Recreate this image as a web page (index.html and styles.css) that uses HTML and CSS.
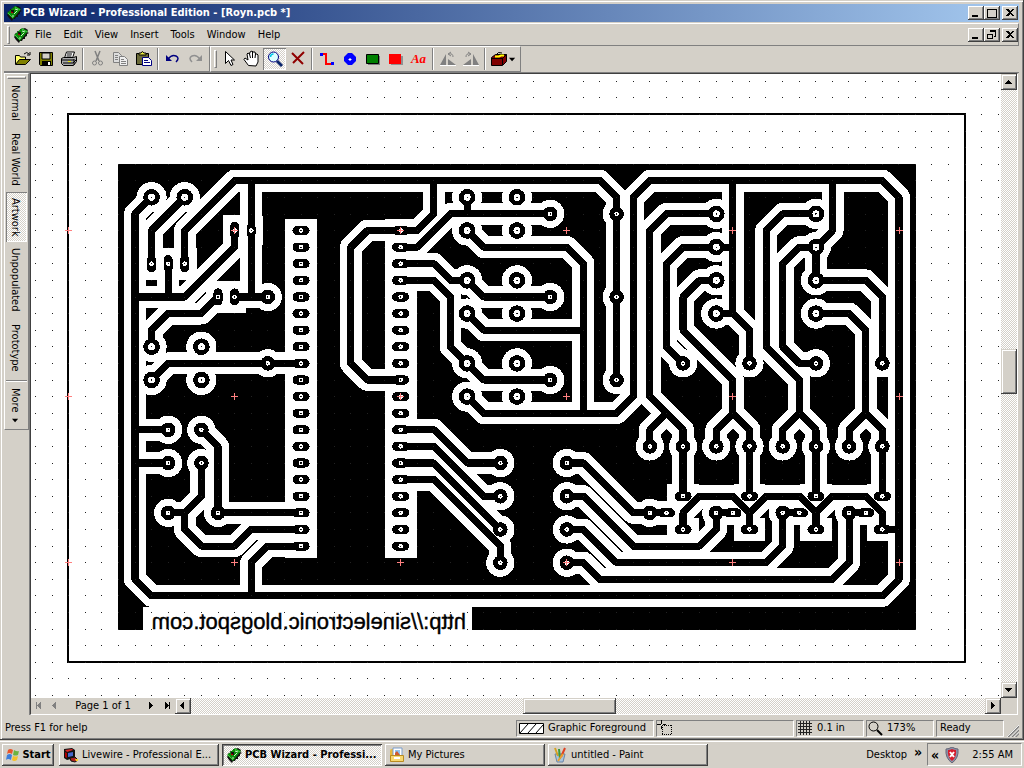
FILE: index.html
```
<!DOCTYPE html>
<html lang="en">
<head>
    <meta charset="utf-8">
    <title>PCB Wizard - Professional Edition - [Royn.pcb *]</title>
    <link rel="stylesheet" href="styles.css">
</head>
<body>
    <!-- shared icons -->
    <svg class="sprite" aria-hidden="true">
        <symbol id="chip" viewBox="0 0 16 16">
            <path d="M1 10l2-3-1-1 3 0-1-2 3 0 0-2 2 0 3-1 3 2-1 2 2 1-2 1 0 2-2 1 0 2-2 0-1 2-2 0-1 2-3-3z" fill="#111"/>
            <path d="M1 8L9 1l6 3-8 10z" fill="#0a8a0a"/>
            <path d="M2 8l5 5M9 2l5 3" stroke="#3fd03f" fill="none"/>
            <path d="M5 5h3v3H5z" fill="#101010"/>
            <path d="M5 7l2 1" stroke="#e00000"/>
            <path d="M9 4l3 1M8 9l3-3M6 11h2" stroke="#c8f0c8"/>
        </symbol>
        <symbol id="min" viewBox="0 0 12 10"><path d="M2 7h6v2H2z"/></symbol>
        <symbol id="close" viewBox="0 0 12 10"><path d="M2 1h2l2 2 2-2h2L7 4.500l3 3.500H8L6 6 4 8H2l3-3.500z"/></symbol>
        <symbol id="up" viewBox="0 0 8 8"><path d="M0 6h7L3.500 2z"/></symbol>
        <symbol id="down" viewBox="0 0 8 8"><path d="M0 2h7L3.500 6z"/></symbol>
        <symbol id="left" viewBox="0 0 8 8"><path d="M5 0v7L1 3.500z"/></symbol>
        <symbol id="right" viewBox="0 0 8 8"><path d="M2 0v7l4-3.500z"/></symbol>
    </svg>

    <div class="window">
        <header class="titlebar">
            <svg class="app-icon"><use href="#chip"/></svg>
            <h1>PCB Wizard - Professional Edition - [Royn.pcb *]</h1>
            <div class="window-buttons">
                <button aria-label="Minimize"><svg><use href="#min"/></svg></button>
                <button aria-label="Maximize"><svg viewBox="0 0 12 10"><path d="M1.500 1h9v8h-9zM1 1.500h10" fill="none" stroke="#000"/></svg></button>
                <button class="close" aria-label="Close"><svg><use href="#close"/></svg></button>
            </div>
        </header>

        <nav class="menubar">
            <span class="grip"></span>
            <svg class="app-icon"><use href="#chip"/></svg>
            <button>File</button>
            <button>Edit</button>
            <button>View</button>
            <button>Insert</button>
            <button>Tools</button>
            <button>Window</button>
            <button>Help</button>
            <div class="window-buttons">
                <button aria-label="Minimize document"><svg><use href="#min"/></svg></button>
                <button aria-label="Restore document"><svg viewBox="0 0 12 10"><path d="M4.500 1v-.500h5V6H8M4 1h6M1.500 4.500h5v4h-5zM1 4h6" fill="none" stroke="#000"/></svg></button>
                <button class="close" aria-label="Close document"><svg><use href="#close"/></svg></button>
            </div>
        </nav>

        <div class="toolbars">
            <div class="toolbar">
                <button aria-label="Open"><svg viewBox="0 0 18 18"><path d="M1.500 14V5.500h4l1 1.500h5v3" fill="#ff6" stroke="#000"/><path d="M1.500 14.500l4-5h11l-5 5z" fill="#808000" stroke="#000"/><path d="M10 4q3-3 5 0M16 2v3h-3" fill="none" stroke="#000"/></svg></button>
                <button aria-label="Save"><svg viewBox="0 0 18 18"><path d="M2.500 2.500h13v13h-12l-1-1z" fill="#808000" stroke="#000"/><path d="M5 3h8v6H5z" fill="#d4d0c8" stroke="#000"/><path d="M5 11h9v5H5z"/><path d="M11 12h2v3h-2z" fill="#fff"/></svg></button>
                <button aria-label="Print"><svg viewBox="0 0 18 18"><path d="M4.500 8l2-6h8l-2 6z" fill="#fff" stroke="#000"/><path d="M7 4h5M6.500 6h5" stroke="#000"/><path d="M1.500 8.500l2-1h10l3-1v5l-3 4h-10l-2-2z" fill="#aaa" stroke="#000"/><path d="M2 10h12M3 13h10l3-3M14 9v6" stroke="#000" fill="none"/><path d="M8 11.500h3" stroke="#ee0"/></svg></button>
                <span class="sep"></span>
                <button aria-label="Cut" disabled><svg viewBox="0 0 18 18"><path d="M6 1l4 10M11 1L7 11" fill="none" stroke="#808080" stroke-width="1.500"/><circle cx="5.500" cy="13" r="2" fill="none" stroke="#808080"/><circle cx="11.500" cy="13" r="2" fill="none" stroke="#808080"/></svg></button>
                <button aria-label="Copy" disabled><svg viewBox="0 0 18 18"><path d="M1.500 2.500h5l3 3v7h-8z" fill="#ddd" stroke="#808080"/><path d="M7.500 6.500h5l3 3v6h-8z" fill="#eee" stroke="#808080"/><path d="M3 5.500h3M3 7.500h3M3 9.500h3M9 9.500h3M9 11.500h5M9 13.500h5" stroke="#808080"/></svg></button>
                <button aria-label="Paste"><svg viewBox="0 0 18 18"><path d="M1.500 3.500h12v11h-12z" fill="#6a6a38" stroke="#000"/><path d="M4 5V3h2q1-3 3 0h2v2z" fill="#ee4" stroke="#000"/><path d="M7.500 7.500h6l3 3v5h-9z" fill="#fff" stroke="#000080"/><path d="M9 10.500h4M9 12.500h6" stroke="#000080"/></svg></button>
                <span class="sep"></span>
                <button aria-label="Undo"><svg viewBox="0 0 18 18"><path d="M4 9q4-5 8-3t0 6" fill="none" stroke="#000080" stroke-width="1.500"/><path d="M2 5v6h6z" fill="#000080"/></svg></button>
                <button aria-label="Redo" disabled><svg viewBox="0 0 18 18"><path d="M13 9q-4-5-8-3t0 6" fill="none" stroke="#909090" stroke-width="1.500"/><path d="M15 5v6H9z" fill="#909090"/></svg></button>
            </div>
            <div class="toolbar">
                <span class="grip"></span>
                <button aria-label="Select"><svg viewBox="0 0 18 18"><path d="M5.500 1.500v12l3-3 2.500 5 2-1-2-4.500h3.500z" fill="#fff" stroke="#000"/></svg></button>
                <button aria-label="Pan"><svg viewBox="0 0 18 18"><path d="M5.500 15.500L1 9.500l1-1.500 3 2L4 4l1-1 1.500 1L7 2l2-1 1 1 2 0 .500 2L14 4l1 1v7l-2 4z" fill="#fff" stroke="#000"/><path d="M6.500 4l1 4M9.500 2v6M12.500 4L12 8" stroke="#000"/></svg></button>
                <button class="pressed" aria-label="Zoom" aria-pressed="true"><svg viewBox="0 0 18 18"><path d="M11 11l5 5" stroke="#0a246a" stroke-width="3"/><circle cx="7.500" cy="7" r="5" fill="#dff" stroke="#000080"/><path d="M4.500 7q0-3 3-3" fill="none" stroke="#00c8e8" stroke-width="1.500"/></svg></button>
                <button aria-label="Delete"><svg viewBox="0 0 18 18"><path d="M3 3l11 11M15 2L4 13" stroke="#900000" stroke-width="2"/></svg></button>
                <span class="sep"></span>
                <button aria-label="Track"><svg viewBox="0 0 18 18"><path d="M3 4h5v10h7" fill="none" stroke="#f00" stroke-width="2"/><path d="M2 3h3v3H2zM13 12h3v3h-3z" fill="#00f"/></svg></button>
                <button aria-label="Pad"><svg viewBox="0 0 18 18"><path d="M7 3h4l4 4v4l-4 4H7l-4-4V7z" fill="#00f"/><path d="M9 8v3M7.500 9.500h3" stroke="#fff"/></svg></button>
                <button aria-label="Component"><svg viewBox="0 0 18 18"><path d="M4 6h12v9H4z" fill="#808080"/><path d="M2.500 4.500h12v9h-12z" fill="#008000" stroke="#000"/></svg></button>
                <button aria-label="Copper area"><svg viewBox="0 0 18 18"><path d="M4 6h12v9H4z" fill="#909090"/><path d="M2 4h12v10H2z" fill="#f00"/></svg></button>
                <button class="text-tool" aria-label="Text">Aa</button>
                <span class="sep"></span>
                <button aria-label="Rotate left" disabled><svg viewBox="0 0 18 18"><path d="M1 15l6-11v11zM9 15v-6l8 6z" fill="#808080"/><path d="M14 7q0-4-4-3M12 2l-3 2 3 2" fill="none" stroke="#808080"/><path d="M1 15.500h16" stroke="#fff"/></svg></button>
                <button aria-label="Rotate right" disabled><svg viewBox="0 0 18 18"><path d="M17 15L11 4v11zM9 15v-6l-8 6z" fill="#808080"/><path d="M4 7q0-4 4-3M6 2l3 2-3 2" fill="none" stroke="#808080"/><path d="M1 15.500h16" stroke="#fff"/></svg></button>
                <span class="sep"></span>
                <button class="wide" aria-label="Gallery"><svg viewBox="0 0 18 18"><path d="M1.500 7.500l4-3h11v7l-4 4h-11z" fill="#800000" stroke="#000"/><path d="M1.500 8.500h11l4-4M12.500 8v7" fill="none" stroke="#000"/><path d="M5 6.500h4l2-1h3" stroke="#ff0" stroke-width="2" fill="none"/><path d="M6 5q2-4 6-2" fill="none" stroke="#000"/></svg><svg class="arrow"><use href="#down"/></svg></button>
            </div>
        </div>

        <main class="workspace">
            <div class="views">
                <span class="grip"></span>
                <button>Normal</button>
                <button>Real World</button>
                <button class="pressed" aria-pressed="true">Artwork</button>
                <button>Unpopulated</button>
                <button>Prototype</button>
                <span class="sep"></span>
                <button class="more">More<svg class="arrow"><use href="#down"/></svg></button>
            </div>

            <div class="document">
                <svg class="board" viewBox="31 74 970 624" preserveAspectRatio="xMinYMin slice" role="img" aria-label="PCB artwork">
                    <defs>
                        <pattern id="dots" x="35" y="81" width="83" height="83" patternUnits="userSpaceOnUse">
                            <path d="M0 .500h1M17 .500h1M33 .500h1M50 .500h1M66 .500h1M0 16.500h1M17 16.500h1M33 16.500h1M50 16.500h1M66 16.500h1M0 33.500h1M17 33.500h1M33 33.500h1M50 33.500h1M66 33.500h1M0 50.500h1M17 50.500h1M33 50.500h1M50 50.500h1M66 50.500h1M0 66.500h1M17 66.500h1M33 66.500h1M50 66.500h1M66 66.500h1" stroke="#222"/>
                        </pattern>

                        <!-- one unit = one 0.1 in grid step -->
                        <g id="tracks">
                            <path d="M5-2L4-1V21L5 22H49L50 21V-2L49-3H35L34-2V10L33 11H25L24 10"/>
                            <path d="M7 2V0L10-3H32L33-2V9"/>
                            <path d="M7-2L5 0V2M6 2V4M4 4H7L10 1V0M11-3V4M10 4H12"/>
                            <path d="M9 4L8 5H6L5 6V7M5 9L6 8H14"/>
                            <path d="M4 12H6M4 14H6M8 12L9 13V17H14M8 14V16L7 17M6 17H7V18L8 19H10L11 18H14M14 19H12L11 20V22"/>
                            <path d="M22-3V-1L21 0H18L17 1V8L18 9H20"/>
                            <path d="M20 1H21L23-1H29M24-2V-1M24 0L25 1H30L31 2V11"/>
                            <path d="M20 2H22L23 3H24L25 4H29M20 3H22L23 4V7L25 9H29M24 5L25 6H31"/>
                            <path d="M20 12H22L24 14H26M20 13H22L25 16H26M20 14H22L26 18M20 15H22L26 19V20"/>
                            <path d="M30 14H31L34 17H36M30 16H31L34 19H38L39 18V17H40M30 18H31L33 20H42L43 19V17H44M30 20H31L32 21H46L47 20V17H48"/>
                            <path d="M39-1H36L35 0V10L37 12V16M36 11L35 12V13"/>
                            <path d="M40 1H37L36 2V7L37 8M40-3V5M39 5H40L41 6V8"/>
                            <path d="M39 3H38L37 4V6L40 9V11L41 12V16M40 11L39 12V13"/>
                            <path d="M45-1H43L42 0V7L44 9V11L45 12V16M44 11L43 12V13"/>
                            <path d="M45 8H44L43 7V2L44 1H45L46 0V-3M45 1V3H48L49 4V8"/>
                            <path d="M45 5H47L48 6V11L49 12V16M48 11L47 12V13"/>
                            <path d="M37 18V17L38 16H40L41 17V18M41 17L42 16H44L45 17V18M45 17L46 16H48L49 17V18H50"/>
                        </g>
                        <path id="large-pads" d="M5-2h0M7-2h0M5 7h0M8 7h0M5 9h0M8 9h0M24-2h0M27-2h0M24 0h0M27 0h0M24 3h0M27 3h0M24 5h0M27 5h0M24 8h0M27 8h0M24 10h0M27 10h0M39-1h0M39 1h0M39 3h0M39 5h0M45-1h0M45 1h0M45 3h0M45 5h0"/>
                        <path id="small-pads" d="M12 4h0M12 8h0M6 12h0M8 12h0M6 14h0M8 14h0M6 17h0M9 17h0M29-1h0M29 4h0M29 9h0M33-1h0M33 4h0M33 9h0M26 14h0M26 16h0M26 18h0M26 20h0M30 14h0M30 16h0M30 18h0M30 20h0M37 8h0M41 8h0M45 8h0M49 8h0M35 13h0M37 13h0M39 13h0M41 13h0M43 13h0M45 13h0M47 13h0M49 13h0M35 17h0M39 17h0M43 17h0M47 17h0"/>
                        <path id="oval-pads" d="M5 1.760v.480M6 1.760v.480M7 1.760v.480M10-.240v.480M11-.150v.300M9 3.760v.480M10 3.760v.480M35.760 17h.480M39.760 17h.480M43.760 17h.480M47.760 17h.480M36.760 16h.480M40.760 16h.480M44.760 16h.480M48.760 16h.480M36.760 18h.480M40.760 18h.480M44.760 18h.480M48.760 18h.480"/>
                        <path id="ic-pads" d="M13.760 0h.480m-.480 1h.480m-.480 1h.480m-.480 1h.480m-.480 1h.480m-.480 1h.480m-.480 1h.480m-.480 1h.480m-.480 1h.480m-.480 1h.480m-.480 1h.480m-.480 1h.480m-.480 1h.480m-.480 1h.480m-.480 1h.480m-.480 1h.480m-.480 1h.480m-.480 1h.480m-.480 1h.480m-.480 1h.480"/>
                        <path id="oval-holes" d="M5 2h0M6 2h0M7 2h0M10 0h0M11 0h0M9 4h0M10 4h0M36 17h0M40 17h0M44 17h0M48 17h0M37 16h0M41 16h0M45 16h0M49 16h0M37 18h0M41 18h0M45 18h0M49 18h0"/>
                        <path id="ic-holes" d="M14 0h0m0 1h0m0 1h0m0 1h0m0 1h0m0 1h0m0 1h0m0 1h0m0 1h0m0 1h0m0 1h0m0 1h0m0 1h0m0 1h0m0 1h0m0 1h0m0 1h0m0 1h0m0 1h0m0 1h0"/>
                        <g id="small-holes">
                            <use href="#small-pads"/>
                            <use href="#oval-holes"/>
                            <use href="#ic-holes"/>
                            <use href="#ic-holes" x="6"/>
                        </g>
                    </defs>

                    <rect x="68" y="114" width="897" height="548" fill="none" stroke="#000" stroke-width="2"/>
                    <rect x="118" y="164" width="798" height="466"/>
                    <rect x="143" y="607" width="329" height="28" fill="#fff"/>

                    <g class="artwork" transform="translate(68.500 230.500) scale(16.610)">
                        <g class="clearance">
                            <use href="#tracks"/>
                            <use class="large" href="#large-pads"/>
                            <use class="small" href="#small-pads"/>
                            <use class="oval" href="#oval-pads"/>
                            <use class="oval" href="#ic-pads"/>
                            <use class="oval" href="#ic-pads" x="6"/>
                        </g>
                        <g class="copper">
                            <use href="#tracks"/>
                            <use class="large" href="#large-pads"/>
                            <use class="small" href="#small-pads"/>
                            <use class="oval" href="#oval-pads"/>
                            <use class="oval" href="#ic-pads"/>
                            <use class="oval" href="#ic-pads" x="6"/>
                        </g>
                        <g class="holes">
                            <use class="large" href="#large-pads"/>
                            <use class="small" href="#small-holes"/>
                        </g>
                        <g class="centres">
                            <use href="#large-pads"/>
                            <use href="#small-holes"/>
                        </g>
                    </g>

                    <!-- the legend is on the copper side, so it reads backwards -->
                    <text class="legend" transform="translate(466 629) scale(-1 1)">http://sinelectronic.blogspot.com</text>
                    <rect x="31" y="74" width="970" height="624" fill="url(#dots)"/>
                    <path class="marks" d="M65 230.500h7m-3.500-3.500v7M231 230.500h7m-3.500-3.500v7M397 230.500h7m-3.500-3.500v7M563 230.500h7m-3.500-3.500v7M729 230.500h7m-3.500-3.500v7M896 230.500h7m-3.500-3.500v7M65 396.500h7m-3.500-3.500v7M231 396.500h7m-3.500-3.500v7M397 396.500h7m-3.500-3.500v7M563 396.500h7m-3.500-3.500v7M729 396.500h7m-3.500-3.500v7M896 396.500h7m-3.500-3.500v7M65 562.500h7m-3.500-3.500v7M231 562.500h7m-3.500-3.500v7M397 562.500h7m-3.500-3.500v7M563 562.500h7m-3.500-3.500v7M729 562.500h7m-3.500-3.500v7M896 562.500h7m-3.500-3.500v7"/>
                </svg>

                <div class="scrollbar vertical">
                    <button aria-label="Scroll up"><svg><use href="#up"/></svg></button>
                    <span class="before"></span>
                    <span class="thumb"></span>
                    <span class="after"></span>
                    <button aria-label="Scroll down"><svg><use href="#down"/></svg></button>
                </div>

                <div class="bottom-row">
                    <div class="pager">
                        <button aria-label="First page" disabled><svg viewBox="0 0 8 8"><path d="M1 0h1v7H1zM6 0v7L2 3.500z"/></svg></button>
                        <button aria-label="Previous page" disabled><svg><use href="#left"/></svg></button>
                        <span>Page 1 of 1</span>
                        <button aria-label="Next page"><svg><use href="#right"/></svg></button>
                        <button aria-label="Last page"><svg viewBox="0 0 8 8"><path d="M6 0h1v7H6zM2 0v7l4-3.500z"/></svg></button>
                    </div>
                    <div class="scrollbar horizontal">
                        <button aria-label="Scroll left"><svg><use href="#left"/></svg></button>
                        <span class="before"></span>
                        <span class="thumb"></span>
                        <span class="after"></span>
                        <button aria-label="Scroll right"><svg><use href="#right"/></svg></button>
                    </div>
                </div>
            </div>
        </main>

        <footer class="statusbar">
            <span class="help">Press F1 for help</span>
            <div class="panel layer"><svg class="hatch" viewBox="0 0 25 11"><path d="M.500.500h24v10H.500z" fill="#fff" stroke="#000"/><path d="M1 10l8-9M9 10l8-9M17 10l7-8" stroke="#000"/></svg>Graphic Foreground</div>
            <div class="panel position"><svg viewBox="0 0 16 16"><path d="M0 4.500h4M6 4.500h3M4.500 0v4M4.500 6v3" stroke="#000"/><path d="M5 5.500h10M5 14.500h10" stroke="#000" stroke-dasharray="1 1"/><path d="M5.500 5v10M14.500 5v10" stroke="#000" stroke-dasharray="1 1"/></svg></div>
            <div class="panel"><svg viewBox="0 0 16 16"><path d="M1 3.500h14M1 6.500h14M1 9.500h14M1 12.500h14M3.500 1v14M6.500 1v14M9.500 1v14M12.500 1v14" stroke="#222"/></svg>0.1 in</div>
            <div class="panel"><svg viewBox="0 0 16 16"><circle cx="6.500" cy="6.500" r="4.500" fill="none" stroke="#000"/><path d="M10 10l5 5" stroke="#000" stroke-width="2"/></svg>173%</div>
            <div class="panel">Ready</div>
            <svg class="resize" viewBox="0 0 14 14"><path d="M2 14L14 2M6 14l8-8M10 14l4-4" stroke="#808080" stroke-width="2"/><path d="M1 14L14 1M5 14l9-9M9 14l5-5" stroke="#fff"/></svg>
        </footer>
    </div>

    <div class="taskbar">
        <button class="start"><svg viewBox="0 0 16 16"><path d="M3 3q2-2 5 0L7 7Q4 5 2 7z" fill="#e8552a"/><path d="M9 3q3 2 5 1l-1 4q-3 1-5 0z" fill="#6cb33e"/><path d="M2 8q3-2 5 0l-1 5q-3-2-5 0z" fill="#3c7edb"/><path d="M8 9q3 1 5 0l-1 4q-3 2-5 0z" fill="#f6c026"/></svg>Start</button>
        <button class="task"><svg viewBox="0 0 16 16"><path d="M1 2l8-1 3 2v8l-8 2-3-2z" fill="#111"/><path d="M2 3l7-1 1 1-6 2z" fill="#d22"/><path d="M5 6l5-1v4l-5 1z" fill="#46c"/><path d="M2 5l2 1v5l-2-1z" fill="#a00"/><path d="M7 11l5-1 3 3-3 2-4-1z" fill="#a22" stroke="#111"/><path d="M12 12h3v2h-2z" fill="#fc2"/></svg><span>Livewire - Professional E...</span></button>
        <button class="task active"><svg><use href="#chip"/></svg><span>PCB Wizard - Professi...</span></button>
        <button class="task"><svg viewBox="0 0 16 16"><path d="M1 4q0-2 2-2h2v13H3q-2 0-2-2z" fill="#e8b83c"/><path d="M4 1h9v9H4z" fill="#fff" stroke="#7a9cc8"/><path d="M6 3h5v5H6z" fill="#8cc4f4"/><path d="M6 6l2-2 3 4H6z" fill="#d05a30"/><path d="M1.500 8.500h13v6h-13z" fill="#f8d870" stroke="#b88a20"/><path d="M5 11h6" stroke="#fff" stroke-width="2"/></svg><span>My Pictures</span></button>
        <button class="task"><svg viewBox="0 0 16 16"><path d="M3 7h10l-2 8H5z" fill="#a8c4e0" stroke="#6a84a4"/><path d="M6 9L3 1" stroke="#d6a020" stroke-width="2"/><path d="M8 12L7 2" stroke="#3a9a3a" stroke-width="2"/><path d="M9 10l4-9" stroke="#e04020" stroke-width="2"/><path d="M6 14l5-7" stroke="#e8a030" stroke-width="2"/></svg><span>untitled - Paint</span></button>
        <span class="desktop">Desktop</span>
        <button class="chevron" aria-label="Show desktop items">»</button>
        <div class="tray">
            <button class="chevron" aria-label="Show hidden icons">«</button>
            <svg viewBox="0 0 16 16"><path d="M8 0q3 2 6 2 1 9-6 14Q1 11 2 2q3 0 6-2z" fill="#8a92a8" stroke="#667"/><path d="M8 2q2 1 4 1 1 7-4 11Q3 10 4 3q2 0 4-1z" fill="#d61c2c"/><path d="M6 5l4 5M10 5l-4 5" stroke="#fff" stroke-width="2"/></svg>
            <time>2:55 AM</time>
        </div>
    </div>
</body>
</html>
```
FILE: styles.css
```
* {
    box-sizing: border-box;
}
body {
    margin: 0;
    height: 100vh;
    display: flex;
    flex-direction: column;
    overflow: hidden;
    background: #d4d0c8;
    color: #000;
    font: 11px/14px "DejaVu Sans Condensed", "DejaVu Sans", sans-serif;
}
button {
    display: flex;
    align-items: center;
    justify-content: center;
    flex: none;
    margin: 0;
    padding: 0;
    border: 0;
    background: transparent;
    color: inherit;
    font: inherit;
    white-space: nowrap;
}
svg {
    display: block;
    flex: none;
}
.sprite {
    position: absolute;
    width: 0;
    height: 0;
}
.window {
    flex: 1;
    min-height: 0;
    display: flex;
    flex-direction: column;
    padding: 4px 4px 2px;
    border-right: 1px solid #404040;
    border-bottom: 1px solid #404040;
    box-shadow: inset 1px 1px #d4d0c8, inset 2px 2px #fff, inset -1px -1px #808080;
}

/* title and menu */
.titlebar {
    display: flex;
    align-items: center;
    height: 18px;
    padding: 0 1px 0 2px;
    background: linear-gradient(to right, #0a246a, #a6caf0);
    color: #fff;
}
.titlebar h1 {
    flex: 1;
    margin: 0 0 0 1px;
    font-size: 11px;
    line-height: 18px;
    white-space: nowrap;
}
.app-icon {
    width: 16px;
    height: 16px;
}
.window-buttons {
    display: flex;
    margin-left: auto;
}
.window-buttons button {
    width: 16px;
    height: 14px;
    padding: 0;
    background: #d4d0c8;
    box-shadow: inset -1px -1px #404040, inset 1px 1px #fff, inset -2px -2px #808080;
}
.window-buttons .close {
    margin-left: 2px;
}
.window-buttons svg {
    width: 12px;
    height: 10px;
    shape-rendering: crispEdges;
}
.menubar {
    display: flex;
    align-items: center;
    height: 23px;
    margin-top: 1px;
    padding: 0 0 0 3px;
    border-top: 1px solid #fff;
    border-right: 1px solid #808080;
    border-bottom: 1px solid #808080;
}
.menubar > button {
    height: 18px;
    padding: 0 6px;
}
.menubar .app-icon {
    margin: 0 0 0 3px;
}
.grip {
    flex: none;
    width: 3px;
    height: 18px;
    border: 1px solid #808080;
    border-top-color: #fff;
    border-left-color: #fff;
}

/* toolbars */
.toolbars {
    display: flex;
    height: 26px;
}
.toolbar {
    display: flex;
    align-items: center;
    padding: 0 2px 0 7px;
    border-top: 1px solid #fff;
    border-right: 1px solid #808080;
    border-bottom: 1px solid #808080;
}
.toolbar + .toolbar {
    padding-left: 3px;
    border-left: 1px solid #fff;
}
.toolbar button {
    width: 23px;
    height: 22px;
}
.toolbar svg {
    width: 18px;
    height: 18px;
}
.toolbar .wide {
    width: 30px;
}
.toolbar .arrow {
    width: 7px;
    height: 7px;
    margin-left: 1px;
}
.toolbar .sep {
    width: 2px;
    height: 22px;
    margin: 0 2px;
    border-left: 1px solid #808080;
    border-right: 1px solid #fff;
}
.toolbar .text-tool {
    color: #f00;
    font: italic bold 13px/18px "Liberation Serif", serif;
}
.toolbar .pressed,
.views .pressed {
    background: repeating-conic-gradient(#fff 0 25%, #d4d0c8 0 50%) 0 0 / 2px 2px;
    box-shadow: inset 1px 1px #808080, inset -1px -1px #fff;
}

/* workspace */
.workspace {
    flex: 1;
    min-height: 0;
    display: flex;
    border-top: 1px solid #808080;
}
.views {
    display: flex;
    flex-direction: column;
    align-items: center;
    align-self: flex-start;
    width: 25px;
    margin-right: 1px;
    padding: 2px 2px 1px;
    border: 1px solid #fff;
    border-right-color: #808080;
    border-bottom-color: #808080;
}
.views .grip {
    width: 19px;
    height: 3px;
}
.views button {
    writing-mode: vertical-rl;
    width: 21px;
    padding: 6px 3px 6px 0;
}
.views .sep {
    width: 21px;
    height: 2px;
    margin: 3px 0 0;
    border-top: 1px solid #808080;
    border-bottom: 1px solid #fff;
}
.views .more {
    padding-bottom: 4px;
}
.views .arrow {
    width: 7px;
    height: 7px;
    margin-top: 4px;
}
.document {
    flex: 1;
    min-width: 0;
    display: grid;
    grid-template-columns: minmax(0, 1fr) 16px;
    grid-template-rows: minmax(0, 1fr) 16px;
    margin-right: 1px;
    border: 1px solid #404040;
    border-right-color: #fff;
    border-bottom-color: #fff;
    box-shadow: -1px 0 #808080;
}
.board {
    width: 100%;
    height: 100%;
    background: #fff;
    shape-rendering: crispEdges;
}
.artwork {
    fill: none;
    stroke-linecap: round;
    stroke-linejoin: round;
}
.clearance {
    stroke: #fff;
    stroke-width: 1.320;
}
.clearance .large {
    stroke-width: 1.820;
}
.clearance .small {
    stroke-width: 1.700;
}
.clearance .oval {
    stroke-width: 1.430;
    stroke-linecap: square;
}
.copper {
    stroke: #000;
    stroke-width: .430;
}
.copper .large {
    stroke-width: 1;
}
.copper .small {
    stroke-width: .880;
}
.copper .oval {
    stroke-width: .550;
}
.holes {
    stroke: #fff;
}
.holes .large {
    stroke-width: .420;
}
.holes .small {
    stroke-width: .280;
}
.centres {
    stroke: #000;
    stroke-width: .070;
    stroke-linecap: square;
}
.legend {
    font: 22px "Liberation Sans", Arial, sans-serif;
    stroke: #000;
    stroke-width: .400;
}
.marks {
    stroke: #ff8080;
}

/* scrollbars */
.scrollbar {
    display: flex;
    background: repeating-conic-gradient(#fff 0 25%, #d4d0c8 0 50%) 0 0 / 2px 2px;
}
.scrollbar.vertical {
    flex-direction: column;
}
.scrollbar.horizontal {
    flex: 1;
}
.scrollbar button {
    width: 16px;
    height: 16px;
}
.scrollbar button,
.thumb {
    background: #d4d0c8;
    box-shadow: inset -1px -1px #404040, inset 1px 1px #d4d0c8, inset 2px 2px #fff, inset -2px -2px #808080;
}
.scrollbar svg,
.pager svg {
    width: 8px;
    height: 8px;
    shape-rendering: crispEdges;
}
.vertical .before {
    flex: 259;
}
.vertical .thumb {
    flex: 45;
}
.vertical .after {
    flex: 288;
}
.horizontal .before {
    flex: 332;
}
.horizontal .thumb {
    flex: 93;
}
.horizontal .after {
    flex: 369;
}
.bottom-row {
    display: flex;
    min-width: 0;
}
.pager {
    display: flex;
    align-items: center;
    width: 144px;
}
.pager span {
    flex: 1;
    text-align: center;
    white-space: nowrap;
}
.pager button {
    width: 16px;
    height: 16px;
}
.pager button:disabled {
    fill: #808080;
}

/* status bar */
.statusbar {
    display: flex;
    align-items: center;
    gap: 2px;
    height: 20px;
    margin-top: 2px;
    padding-top: 2px;
}
.statusbar .help {
    flex: 1;
    padding-left: 1px;
}
.panel {
    display: flex;
    align-items: center;
    gap: 4px;
    width: 68px;
    height: 17px;
    padding: 0 3px;
    border: 1px solid #808080;
    border-right-color: #fff;
    border-bottom-color: #fff;
    white-space: nowrap;
}
.panel svg {
    width: 16px;
    height: 16px;
    margin-left: -3px;
}
.panel.layer {
    width: 138px;
}
.panel.position {
    width: 138px;
}
.panel.position svg {
    shape-rendering: crispEdges;
}
.panel .hatch {
    width: 25px;
    height: 11px;
    margin-left: -1px;
}
.resize {
    width: 13px;
    height: 13px;
    align-self: flex-end;
}

/* taskbar */
.taskbar {
    display: flex;
    align-items: center;
    gap: 3px;
    height: 27px;
    margin-top: 1px;
    padding: 0 2px 1px;
    border-top: 1px solid #fff;
}
.taskbar svg {
    width: 16px;
    height: 16px;
}
.start,
.task {
    height: 22px;
    box-shadow: inset -1px -1px #404040, inset 1px 1px #fff, inset -2px -2px #808080;
}
.start {
    width: 52px;
    margin-right: 2px;
    gap: 1px;
    font-weight: bold;
}
.task {
    flex: 0 1 160px;
    min-width: 0;
    justify-content: flex-start;
    gap: 3px;
    padding: 0 2px 0 4px;
}
.task.active {
    background: repeating-conic-gradient(#fff 0 25%, #d4d0c8 0 50%) 0 0 / 2px 2px;
    box-shadow: inset 1px 1px #404040, inset -1px -1px #fff, inset 2px 2px #808080;
    font-weight: bold;
}
.desktop {
    margin-left: auto;
}
.chevron {
    width: 12px;
    font-size: 14px;
    font-weight: bold;
}
.desktop + .chevron {
    margin: 0 0 6px 2px;
}
.tray {
    display: flex;
    align-items: center;
    gap: 3px;
    width: 95px;
    height: 23px;
    padding: 0 8px 0 1px;
    border: 1px solid #808080;
    border-right-color: #fff;
    border-bottom-color: #fff;
}
.tray time {
    margin-left: auto;
    white-space: nowrap;
}
```
